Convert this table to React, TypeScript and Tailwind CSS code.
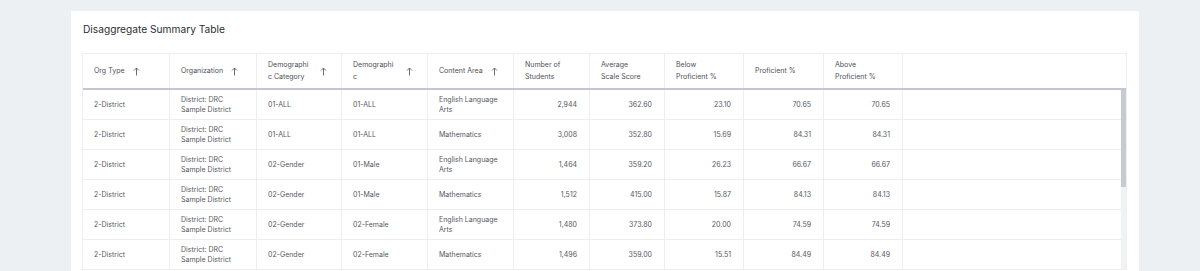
const columns = [
  { label: "Org Type", width: "w-[87px]", sort: true },
  { label: "Organization", width: "w-[87px]", sort: true },
  { label: "Demographic Category", width: "w-[85px]", sort: true, wrap: true },
  { label: "Demographic", width: "w-[86px]", sort: true, wrap: true },
  { label: "Content Area", width: "w-[86px]", sort: true },
  { label: "Number of Students", width: "w-[76px]", num: true },
  { label: "Average Scale Score", width: "w-[75px]", num: true },
  { label: "Below Proficient %", width: "w-[79px]", num: true },
  { label: "Proficient %", width: "w-[80px]", num: true },
  { label: "Above Proficient %", width: "w-[79px]", num: true },
];

const rows = [
  ["2-District", "District: DRC Sample District", "01-ALL", "01-ALL", "English Language Arts", "2,944", "362.60", "23.10", "70.65", "70.65"],
  ["2-District", "District: DRC Sample District", "01-ALL", "01-ALL", "Mathematics", "3,008", "352.80", "15.69", "84.31", "84.31"],
  ["2-District", "District: DRC Sample District", "02-Gender", "01-Male", "English Language Arts", "1,464", "359.20", "26.23", "66.67", "66.67"],
  ["2-District", "District: DRC Sample District", "02-Gender", "01-Male", "Mathematics", "1,512", "415.00", "15.87", "84.13", "84.13"],
  ["2-District", "District: DRC Sample District", "02-Gender", "02-Female", "English Language Arts", "1,480", "373.80", "20.00", "74.59", "74.59"],
  ["2-District", "District: DRC Sample District", "02-Gender", "02-Female", "Mathematics", "1,496", "359.00", "15.51", "84.49", "84.49"],
];

function SortArrow() {
  return (
    <svg width="7" height="9" viewBox="0 0 7 9" fill="none" className="shrink-0">
      <path d="M3.5 8.5V1M1 3.5L3.5 1L6 3.5" stroke="#6b6e73" strokeWidth="1" />
    </svg>
  );
}

function App() {
  return (
    <div className="h-[271px] overflow-hidden bg-[#edf0f3] pt-[11px] font-['Inter',sans-serif]">
      <div className="ml-[71px] h-full w-[1068px] bg-white pl-[11px] pr-[12px] pt-[12px]">
        <h2 className="mb-[18px] pl-px text-[10.2px] leading-[12px] text-[#2b2d30]">
          Disaggregate Summary Table
        </h2>

        <div className="border-l border-r border-t border-[#eceef1]">
          <div className="flex h-[36px] border-b-2 border-[#c3c7cd] text-[7px] leading-[12px] text-[#4d5055]">
            {columns.map((col) => (
              <div
                key={col.label}
                className={`${col.width} flex shrink-0 items-center border-r border-[#eceef1] pl-[11px] ${
                  col.wrap ? "pr-[14px]" : "pr-[10px]"
                }`}
              >
                {col.wrap ? (
                  <>
                    <span className="w-[44px] break-all">{col.label}</span>
                    <span className="ml-auto">
                      <SortArrow />
                    </span>
                  </>
                ) : (
                  <>
                    <span className={col.num ? "max-w-[44px]" : ""}>{col.label}</span>
                    {col.sort && (
                      <span className="ml-[8px]">
                        <SortArrow />
                      </span>
                    )}
                  </>
                )}
              </div>
            ))}
            <div className="flex-1" />
          </div>

          <div className="flex">
            <div className="flex-1">
              {rows.map((row, i) => (
                <div
                  key={i}
                  className="flex h-[30px] border-b border-[#eceef1] text-[7px] leading-[10px] text-[#55585d]"
                >
                  {row.map((cell, j) => (
                    <div
                      key={j}
                      className={`${columns[j].width} flex shrink-0 items-center border-r border-[#eceef1] ${
                        columns[j].num ? "justify-end pr-[12px]" : "pl-[11px] pr-[12px]"
                      }`}
                    >
                      {cell}
                    </div>
                  ))}
                  <div className="flex-1" />
                </div>
              ))}
            </div>
            <div className="w-[5px] bg-[#f1f2f4]">
              <div className="h-[97px] bg-[#c6cbd3]" />
            </div>
          </div>
        </div>
      </div>
    </div>
  );
}

export default App;
